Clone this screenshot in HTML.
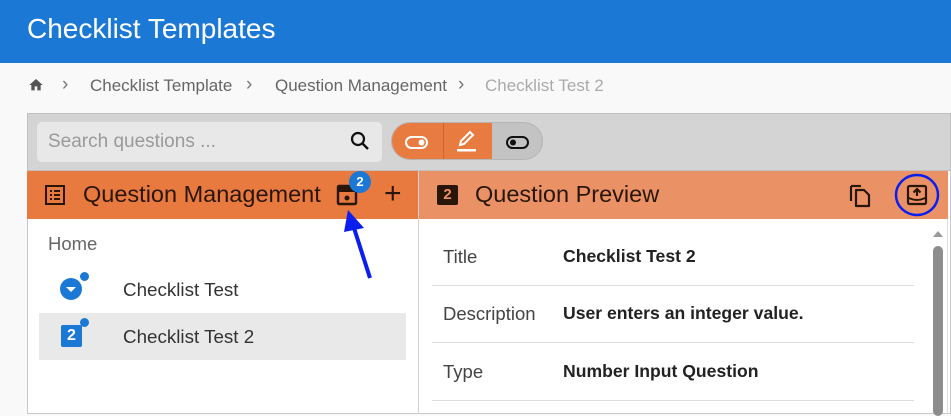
<!DOCTYPE html>
<html><head><meta charset="utf-8"><style>
*{box-sizing:border-box;margin:0;padding:0}
body{width:951px;height:414px;overflow:hidden;background:#f9f9f9;font-family:"Liberation Sans",sans-serif;position:relative}
.a{position:absolute;white-space:nowrap}
</style></head><body>
<div class="a" style="left:0;top:0;width:951px;height:63px;background:#1b78d5"></div>
<div class="a" style="left:27px;top:13px;color:#fff;font-size:28px">Checklist Templates</div>
<svg class="a" style="left:28px;top:77px" width="16" height="16" viewBox="0 0 24 24"><path d="M10 20v-6h4v6h5v-8h3L12 3 2 12h3v8z" fill="#555"/></svg>
<div class="a" style="left:62px;top:74px;font-size:19px;color:#777">›</div>
<div class="a" style="left:90px;top:76px;font-size:17px;color:#666">Checklist Template</div>
<div class="a" style="left:246px;top:74px;font-size:19px;color:#777">›</div>
<div class="a" style="left:275px;top:76px;font-size:17px;color:#666">Question Management</div>
<div class="a" style="left:458px;top:74px;font-size:19px;color:#777">›</div>
<div class="a" style="left:485px;top:76px;font-size:17px;color:#aaa">Checklist Test 2</div>

<div class="a" style="left:27px;top:113px;width:924px;height:301px;background:#fff;border:1px solid #c8c8c8"></div>
<div class="a" style="left:27px;top:113px;width:924px;height:58px;background:#d4d4d4;border:1px solid #c0c0c0"></div>
<div class="a" style="left:37px;top:122px;width:345px;height:40px;background:#e8e8e8;border-radius:5px"></div>
<div class="a" style="left:48px;top:131px;font-size:19px;color:#9a9a9a">Search questions ...</div>
<svg class="a" style="left:348px;top:129px" width="24" height="24" viewBox="0 0 24 24"><circle cx="10" cy="10" r="6" fill="none" stroke="#111" stroke-width="2.2"/><path d="M14.5 14.5L20 20" stroke="#111" stroke-width="2.4"/></svg>
<div class="a" style="left:391px;top:122px;width:152px;height:38px;border-radius:19px;background:#c3c3c3;overflow:hidden;border:1px solid #b5b5b5">
 <div class="a" style="left:0;top:0;width:100px;height:38px;background:#e87b40"></div>
 <div class="a" style="left:51px;top:0;width:1px;height:38px;background:#c96530"></div>
</div>
<svg class="a" style="left:404px;top:132px" width="26" height="20" viewBox="0 0 26 20"><rect x="2" y="5" width="21" height="11" rx="5.5" fill="none" stroke="#fff" stroke-width="2"/><circle cx="17.5" cy="10.5" r="3" fill="#fff"/></svg>
<svg class="a" style="left:455px;top:128px" width="24" height="26" viewBox="0 0 24 26"><path d="M5 17l1-4 9-9 3 3-9 9z" fill="none" stroke="#fff" stroke-width="2"/><rect x="2" y="21" width="19" height="2.5" fill="#fff"/></svg>
<svg class="a" style="left:505px;top:132px" width="26" height="20" viewBox="0 0 26 20"><rect x="2" y="5" width="21" height="11" rx="5.5" fill="none" stroke="#111" stroke-width="2"/><circle cx="8" cy="10.5" r="3" fill="#111"/></svg>

<div class="a" style="left:27px;top:171px;width:391px;height:48px;background:#e8793f"></div>
<svg class="a" style="left:44px;top:184px" width="22" height="22" viewBox="0 0 22 22"><rect x="2" y="2" width="18" height="18" fill="none" stroke="#2a1608" stroke-width="2"/><rect x="6" y="6" width="2" height="2" fill="#2a1608"/><rect x="10" y="6" width="6" height="2" fill="#2a1608"/><rect x="6" y="10" width="2" height="2" fill="#2a1608"/><rect x="10" y="10" width="6" height="2" fill="#2a1608"/><rect x="6" y="14" width="2" height="2" fill="#2a1608"/><rect x="10" y="14" width="6" height="2" fill="#2a1608"/></svg>
<div class="a" style="left:83px;top:181px;font-size:23.5px;color:#2a1608">Question Management</div>
<svg class="a" style="left:336px;top:184px" width="22" height="22" viewBox="0 0 22 22"><rect x="2" y="2" width="18" height="18" rx="1" fill="none" stroke="#2a1608" stroke-width="2.4"/><rect x="2" y="2" width="18" height="6" fill="#2a1608"/><circle cx="11" cy="14" r="2.5" fill="#2a1608"/></svg>
<div class="a" style="left:349px;top:171px;width:22px;height:22px;border-radius:50%;background:#1b78d5;color:#fff;font-size:13px;font-weight:bold;text-align:center;line-height:22px">2</div>
<div class="a" style="left:384px;top:178px;font-size:30px;color:#2a1608;line-height:32px">+</div>
<svg class="a" style="left:340px;top:210px" width="40" height="72" viewBox="0 0 40 72"><path d="M30 68L14 18" stroke="#0a1ef0" stroke-width="4"/><path d="M8 0L24 18L4 22Z" fill="#0a1ef0"/></svg>
<div class="a" style="left:418px;top:171px;width:1px;height:243px;background:#d0d0d0"></div>

<div class="a" style="left:48px;top:233px;font-size:18.5px;color:#666">Home</div>
<div class="a" style="left:60px;top:278px;width:22px;height:22px;border-radius:50%;background:#1b78d5"></div>
<div class="a" style="left:66px;top:287px;width:0;height:0;border-left:5px solid transparent;border-right:5px solid transparent;border-top:5px solid #fff"></div>
<div class="a" style="left:80px;top:272px;width:9px;height:9px;border-radius:50%;background:#1b78d5"></div>
<div class="a" style="left:123px;top:279px;font-size:18.8px;color:#333">Checklist Test</div>
<div class="a" style="left:39px;top:313px;width:367px;height:47px;background:#e9e9e9"></div>
<div class="a" style="left:61px;top:325px;width:21px;height:22px;border-radius:2px;background:#1b78d5;color:#fff;font-size:16px;font-weight:bold;text-align:center;line-height:22px">2</div>
<div class="a" style="left:80px;top:318px;width:9px;height:9px;border-radius:50%;background:#1b78d5"></div>
<div class="a" style="left:123px;top:326px;font-size:18.8px;color:#333">Checklist Test 2</div>

<div class="a" style="left:419px;top:171px;width:529px;height:48px;background:#ea9266"></div>
<div class="a" style="left:437px;top:185px;width:21px;height:20px;border-radius:2px;background:#2a1608;color:#ea9266;font-size:15px;font-weight:bold;text-align:center;line-height:20px">2</div>
<div class="a" style="left:475px;top:181px;font-size:23.5px;color:#2a1608">Question Preview</div>
<svg class="a" style="left:847px;top:181px" width="28" height="28" viewBox="0 0 28 28"><path d="M4 5v15" stroke="#2a1608" stroke-width="2.2" fill="none"/><path d="M4 5h10" stroke="#2a1608" stroke-width="2.2"/><path d="M9 9h8l5 5v11H9z" fill="none" stroke="#2a1608" stroke-width="2.2" stroke-linejoin="round"/></svg>
<svg class="a" style="left:894px;top:172px" width="48" height="46" viewBox="0 0 48 46"><ellipse cx="23" cy="23" rx="21" ry="20" fill="none" stroke="#0a1ef0" stroke-width="2.5"/><rect x="14" y="14" width="18" height="18" rx="1.5" fill="none" stroke="#2a1608" stroke-width="2.2"/><path d="M14 26c3 0 3 2 9 2s6-2 9-2" stroke="#2a1608" stroke-width="2" fill="none"/><path d="M23 24v-7M19.5 20.5L23 17l3.5 3.5" stroke="#2a1608" stroke-width="2.2" fill="none"/></svg>

<div class="a" style="left:443px;top:246px;font-size:18.5px;color:#444">Title</div>
<div class="a" style="left:563px;top:246px;font-size:17.6px;color:#222;font-weight:bold">Checklist Test 2</div>
<div class="a" style="left:432px;top:285px;width:482px;height:1px;background:#ddd"></div>
<div class="a" style="left:443px;top:303px;font-size:18.5px;color:#444">Description</div>
<div class="a" style="left:563px;top:303px;font-size:17.6px;color:#222;font-weight:bold">User enters an integer value.</div>
<div class="a" style="left:432px;top:342px;width:482px;height:1px;background:#ddd"></div>
<div class="a" style="left:443px;top:361px;font-size:18.5px;color:#444">Type</div>
<div class="a" style="left:563px;top:361px;font-size:17.6px;color:#222;font-weight:bold">Number Input Question</div>
<div class="a" style="left:432px;top:400px;width:482px;height:1px;background:#ddd"></div>
<div class="a" style="left:933px;top:231px;width:0;height:0;border-left:5px solid transparent;border-right:5px solid transparent;border-bottom:6px solid #999"></div>
<div class="a" style="left:933px;top:246px;width:10px;height:170px;border-radius:5px;background:#8d8d8d"></div>
<div class="a" style="left:947px;top:219px;width:1px;height:195px;background:#ddd"></div>
</body></html>
